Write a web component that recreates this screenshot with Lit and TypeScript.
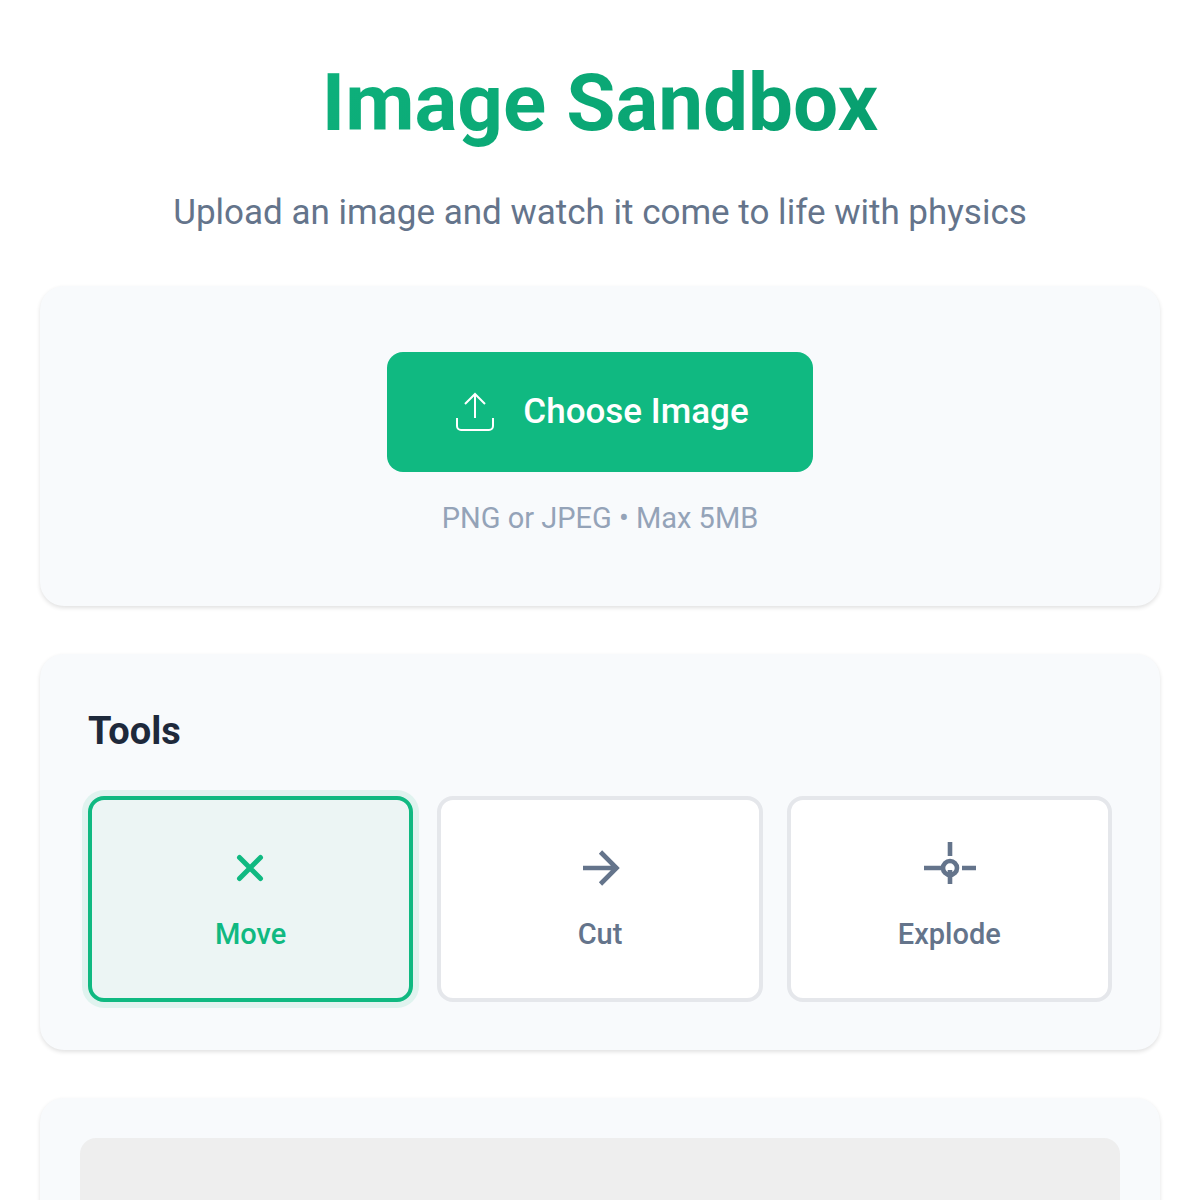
import { LitElement, html, css, svg } from "lit";
import { customElement, state } from "lit/decorators.js";
import { classMap } from "lit/directives/class-map.js";

const tools = [
  {
    id: "move",
    label: "Move",
    icon: svg`<path d="M16.500 17.500l21 21M37.500 17.500l-21 21" stroke-width="5" stroke-linecap="round" />`,
  },
  {
    id: "cut",
    label: "Cut",
    icon: svg`<path d="M11 28h34M28.500 12l16 16-16 16" />`,
  },
  {
    id: "explode",
    label: "Explode",
    icon: svg`<circle cx="29" cy="28" r="7" />
      <path d="M29 2v14M29 30v14M3 28h18M41 28h14" />`,
  },
];

@customElement("app-root")
export class AppRoot extends LitElement {
  static styles = css`
    :host {
      display: block;
      min-height: 100vh;
      background: #fff;
      color: #1e293b;
      font-family: Roboto, "Liberation Sans", sans-serif;
    }
    * {
      box-sizing: border-box;
    }
    .page {
      display: flex;
      flex-direction: column;
      gap: 48px;
      padding: 40px;
    }
    .header {
      padding-top: 15px;
      text-align: center;
    }
    .title {
      margin: 0 0 37px;
      font-size: 80px;
      font-weight: 700;
      line-height: 96px;
      background: linear-gradient(135deg, #10b981, #059669);
      -webkit-background-clip: text;
      background-clip: text;
      color: transparent;
    }
    .subtitle {
      margin: 0;
      color: #64748b;
      font-size: 35px;
      line-height: 50px;
    }
    .card {
      border-radius: 24px;
      background: #f8fafc;
      box-shadow: 0 2px 4px rgba(0, 0, 0, 0.12);
    }
    .upload {
      display: flex;
      flex-direction: column;
      align-items: center;
      gap: 24px;
      padding: 66px 48px;
    }
    .choose {
      display: flex;
      align-items: center;
      gap: 24px;
      height: 120px;
      padding: 0 64px;
      border: 0;
      border-radius: 16px;
      background: #10b981;
      color: #fff;
      font: 500 35px/50px Roboto, "Liberation Sans", sans-serif;
      cursor: pointer;
    }
    .upload-icon {
      width: 48px;
      height: 48px;
      fill: none;
      stroke: currentColor;
      stroke-width: 2;
    }
    .hint {
      margin: 0;
      color: #94a3b8;
      font-size: 29px;
      line-height: 44px;
    }
    .tools {
      padding: 48px;
    }
    .heading {
      margin: 0 0 36px;
      font-size: 38px;
      font-weight: 700;
      line-height: 58px;
    }
    .grid {
      display: grid;
      grid-template-columns: repeat(3, 1fr);
      gap: 24px;
    }
    .tool {
      display: flex;
      flex-direction: column;
      align-items: center;
      gap: 16px;
      padding: 40px 16px 42px;
      border: 4px solid #e5e7eb;
      border-radius: 16px;
      background: #fff;
      color: #64748b;
      font: 500 29px/44px Roboto, "Liberation Sans", sans-serif;
      cursor: pointer;
    }
    .tool.active {
      border-color: #10b981;
      background: #ecf5f4;
      color: #10b981;
      box-shadow: 0 0 0 6px rgba(16, 185, 129, 0.1);
    }
    .tool-icon {
      width: 56px;
      height: 56px;
      fill: none;
      stroke: currentColor;
      stroke-width: 4.6;
    }
    .stage {
      padding: 40px;
    }
    .canvas {
      display: block;
      width: 100%;
      height: 800px;
      border-radius: 16px;
      background: #eee;
    }
  `;

  @state() private active = "move";

  render() {
    return html`
      <main class="page">
        <header class="header">
          <h1 class="title">Image Sandbox</h1>
          <p class="subtitle">Upload an image and watch it come to life with physics</p>
        </header>
        <section class="card upload">
          <button class="choose" type="button">
            <svg class="upload-icon" viewBox="0 0 48 48" aria-hidden="true">
              <path d="M24 30V6M14 16L24 6l10 10M6 30v8a4 4 0 0 0 4 4h28a4 4 0 0 0 4-4v-8" />
            </svg>
            Choose Image
          </button>
          <p class="hint">PNG or JPEG • Max 5MB</p>
        </section>
        <section class="card tools">
          <h2 class="heading">Tools</h2>
          <div class="grid">
            ${tools.map(
              (t) => html`<button
                type="button"
                class=${classMap({ tool: true, active: t.id === this.active })}
                aria-pressed=${t.id === this.active ? "true" : "false"}
                @click=${() => (this.active = t.id)}
              >
                <svg class="tool-icon" viewBox="0 0 56 56" aria-hidden="true">${t.icon}</svg>
                <span>${t.label}</span>
              </button>`
            )}
          </div>
        </section>
        <section class="card stage">
          <canvas class="canvas"></canvas>
        </section>
      </main>
    `;
  }
}
